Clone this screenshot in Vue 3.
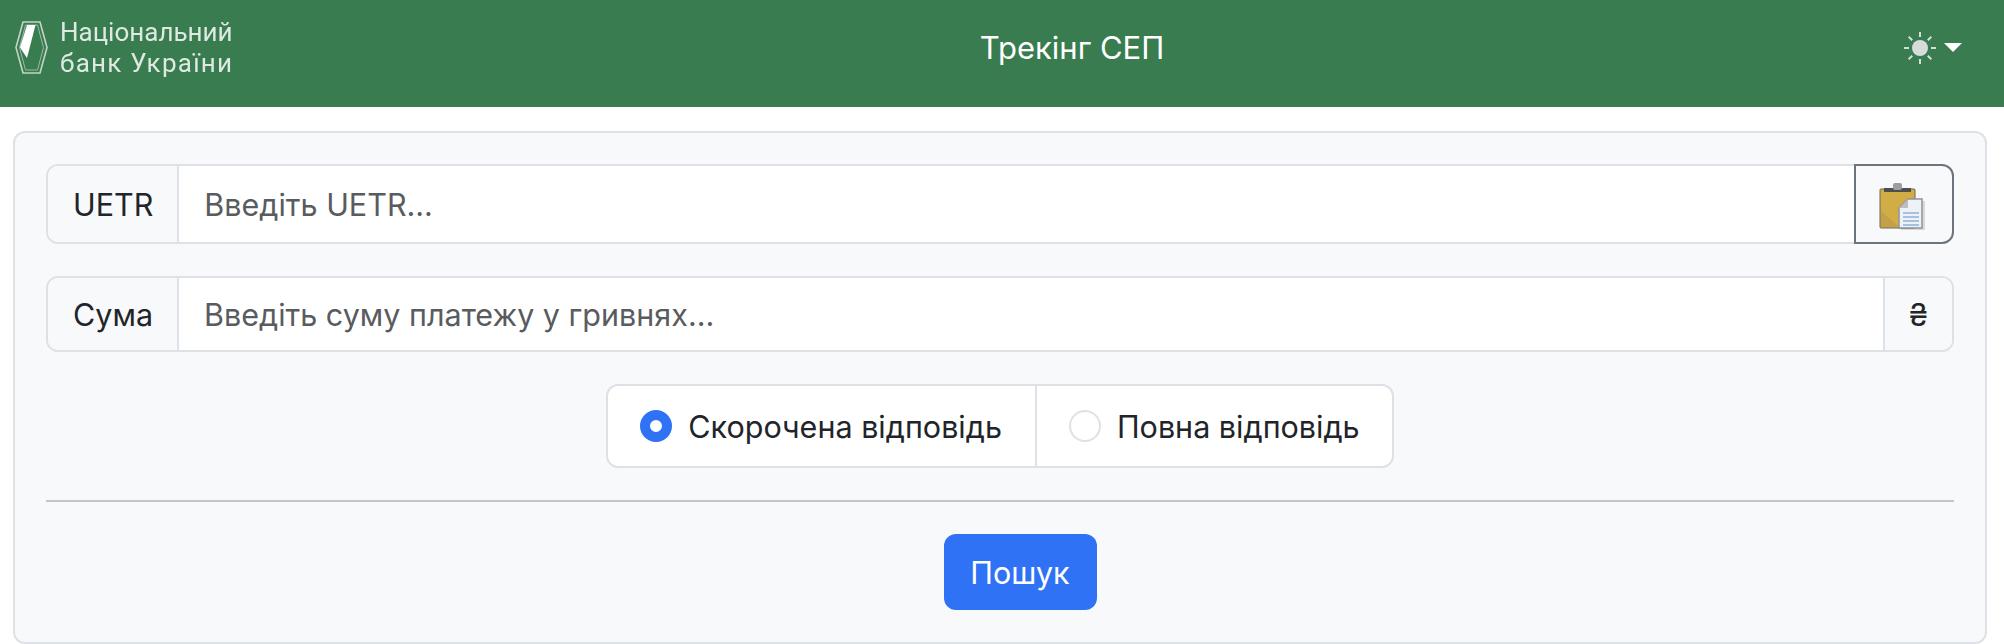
<template>
  <header class="topbar">
    <a class="logo" href="#">
      <svg class="logo-mark" width="33" height="53" viewBox="0 0 33 53">
        <path d="M8 1h17l7 25.500-7 25.500H8L1 26.500z" fill="none" stroke="#c4d4c9" stroke-width="1.600" />
        <path d="M10.500 4h12l6 22.500-6 22.500h-12l-6-22.500z" fill="none" stroke="#9dbba7" stroke-width="1" />
        <path d="M12 4h8.500L12 37l-7-10.500z" fill="#fff" />
      </svg>
      <span class="logo-text">
        <span class="logo-line">Національний</span>
        <span class="logo-line logo-line-wide">банк України</span>
      </span>
    </a>
    <div class="title">Трекінг СЕП</div>
    <button class="theme-btn" type="button" aria-label="Тема">
      <svg width="32" height="32" viewBox="0 0 32 32">
        <circle cx="16" cy="16" r="8" fill="#d6ddd8" />
        <g stroke="#d6ddd8" stroke-width="2">
          <path v-for="ray in rays" :key="ray" d="M16 5V0" :transform="`rotate(${ray} 16 16)`" />
        </g>
      </svg>
      <span class="caret"></span>
    </button>
  </header>

  <main class="card">
    <div class="field field-uetr">
      <span class="addon addon-label">UETR</span>
      <input class="control" type="text" placeholder="Введіть UETR..." />
      <button class="paste" type="button" aria-label="Вставити">
        <svg width="46" height="48" viewBox="0 0 46 48">
          <rect x="1" y="6" width="35" height="39" rx="1" fill="#d2ac45" stroke="#6f6650" stroke-width="1" />
          <path d="M2 28l18 16H2z" fill="#b89a4e" opacity=".6" />
          <rect x="5" y="5" width="27" height="4" fill="#4b4f50" />
          <rect x="14" y="0" width="9" height="7" rx="2" fill="#9a9f9f" />
          <path d="M22 47h24V18H31l-9 9z" fill="#000" opacity=".12" />
          <path d="M20 45h23V16H29l-9 9z" fill="#eef2f6" stroke="#8d9499" stroke-width="1.5" />
          <path d="M29 16v9h-9z" fill="#b9bfc3" />
          <path d="M24 30h16M24 34h16M24 38h16M24 42h16" stroke="#8fb0dc" stroke-width="1.6" />
        </svg>
      </button>
    </div>

    <div class="field field-sum">
      <span class="addon addon-label">Сума</span>
      <input class="control" type="text" placeholder="Введіть суму платежу у гривнях..." />
      <span class="addon addon-end">₴</span>
    </div>

    <div class="modes">
      <label v-for="(mode, index) in modes" :key="mode" class="mode">
        <span class="dot" :class="{ active: selected === index }"></span>
        <input v-model="selected" class="native" type="radio" name="mode" :value="index" />
        {{ mode }}
      </label>
    </div>

    <hr class="rule" />

    <div class="actions">
      <button class="search" type="button">Пошук</button>
    </div>
  </main>
</template>

<script setup>
import { ref } from 'vue'

const rays = [0, 45, 90, 135, 180, 225, 270, 315]
const modes = ['Скорочена відповідь', 'Повна відповідь']
const selected = ref(0)
</script>

<style>
html,
body {
  margin: 0;
  background: #fff;
}
</style>

<style scoped>
.topbar {
  height: 107px;
  box-sizing: border-box;
  padding: 0 42px 12px 15px;
  background: #387c4f;
  display: flex;
  align-items: center;
  justify-content: space-between;
  font-family: Inter, "Liberation Sans", sans-serif;
}

.logo {
  display: flex;
  align-items: center;
  gap: 12px;
  width: 225px;
  text-decoration: none;
}

.logo-mark {
  flex-shrink: 0;
}

.logo-text {
  color: #dfe9e3;
  font-family: Roboto, "Liberation Sans", sans-serif;
  font-size: 26px;
  line-height: 31px;
  white-space: nowrap;
  filter: blur(0.4px);
}

.logo-line {
  display: block;
}

.logo-line-wide {
  letter-spacing: 1.25px;
}

.title {
  color: #fff;
  font-size: 31px;
}

.theme-btn {
  display: flex;
  align-items: center;
  gap: 8px;
  padding: 0;
  border: 0;
  background: none;
}

.caret {
  width: 0;
  height: 0;
  border-left: 9px solid transparent;
  border-right: 9px solid transparent;
  border-top: 9px solid #fff;
}

.card {
  margin: 24px 17px 0 13px;
  padding: 31px;
  height: 513px;
  box-sizing: border-box;
  background: #f8f9fa;
  border: 2px solid #dee2e6;
  border-radius: 12px;
  font-family: Inter, "Liberation Sans", sans-serif;
  font-size: 30.5px;
  color: #212529;
}

.field {
  display: flex;
  align-items: stretch;
  box-sizing: border-box;
  border: 2px solid #dee2e6;
  border-radius: 12px;
  background: #fff;
  overflow: hidden;
}

.field-uetr {
  height: 80px;
  margin-bottom: 32px;
  overflow: visible;
}

.field-sum {
  height: 76px;
  margin-bottom: 32px;
}

.addon {
  display: flex;
  align-items: center;
  background: #f8f9fa;
}

.addon-label {
  padding: 0 24px 0 25px;
  border-right: 2px solid #dee2e6;
  border-radius: 10px 0 0 10px;
}

.addon-end {
  padding: 0 24px;
  border-left: 2px solid #dee2e6;
}

.control {
  flex: 1;
  min-width: 0;
  padding: 0 25px;
  border: 0;
  outline: 0;
  background: #fff;
  font: inherit;
  color: #212529;
}

.control::placeholder {
  color: #595c5f;
  opacity: 1;
}

.paste {
  width: 100px;
  margin: -2px -2px -2px 0;
  padding: 6px 4px 0 0;
  display: flex;
  align-items: center;
  justify-content: center;
  background: #f8f9fa;
  border: 2px solid #6c757d;
  border-radius: 0 12px 12px 0;
}

.modes {
  display: flex;
  width: fit-content;
  height: 84px;
  box-sizing: border-box;
  margin: 0 auto 32px;
  background: #fff;
  border: 2px solid #dee2e6;
  border-radius: 12px;
}

.mode {
  display: flex;
  align-items: center;
  gap: 16px;
  padding: 0 32px;
}

.mode:first-child {
  padding-right: 33px;
}

.mode + .mode {
  border-left: 2px solid #dee2e6;
}

.native {
  display: none;
}

.dot {
  width: 32px;
  height: 32px;
  box-sizing: border-box;
  border: 2px solid #dee2e6;
  border-radius: 50%;
  background: #fff;
}

.dot.active {
  border: 10px solid #2f72f5;
}

.rule {
  margin: 0 0 32px;
  border: 0;
  border-top: 2px solid #c4c5c6;
}

.actions {
  display: flex;
  justify-content: center;
  padding-left: 40px;
}

.search {
  width: 153px;
  height: 76px;
  padding: 0;
  border: 0;
  border-radius: 12px;
  background: #2f72f5;
  color: #fff;
  font: inherit;
}
</style>
